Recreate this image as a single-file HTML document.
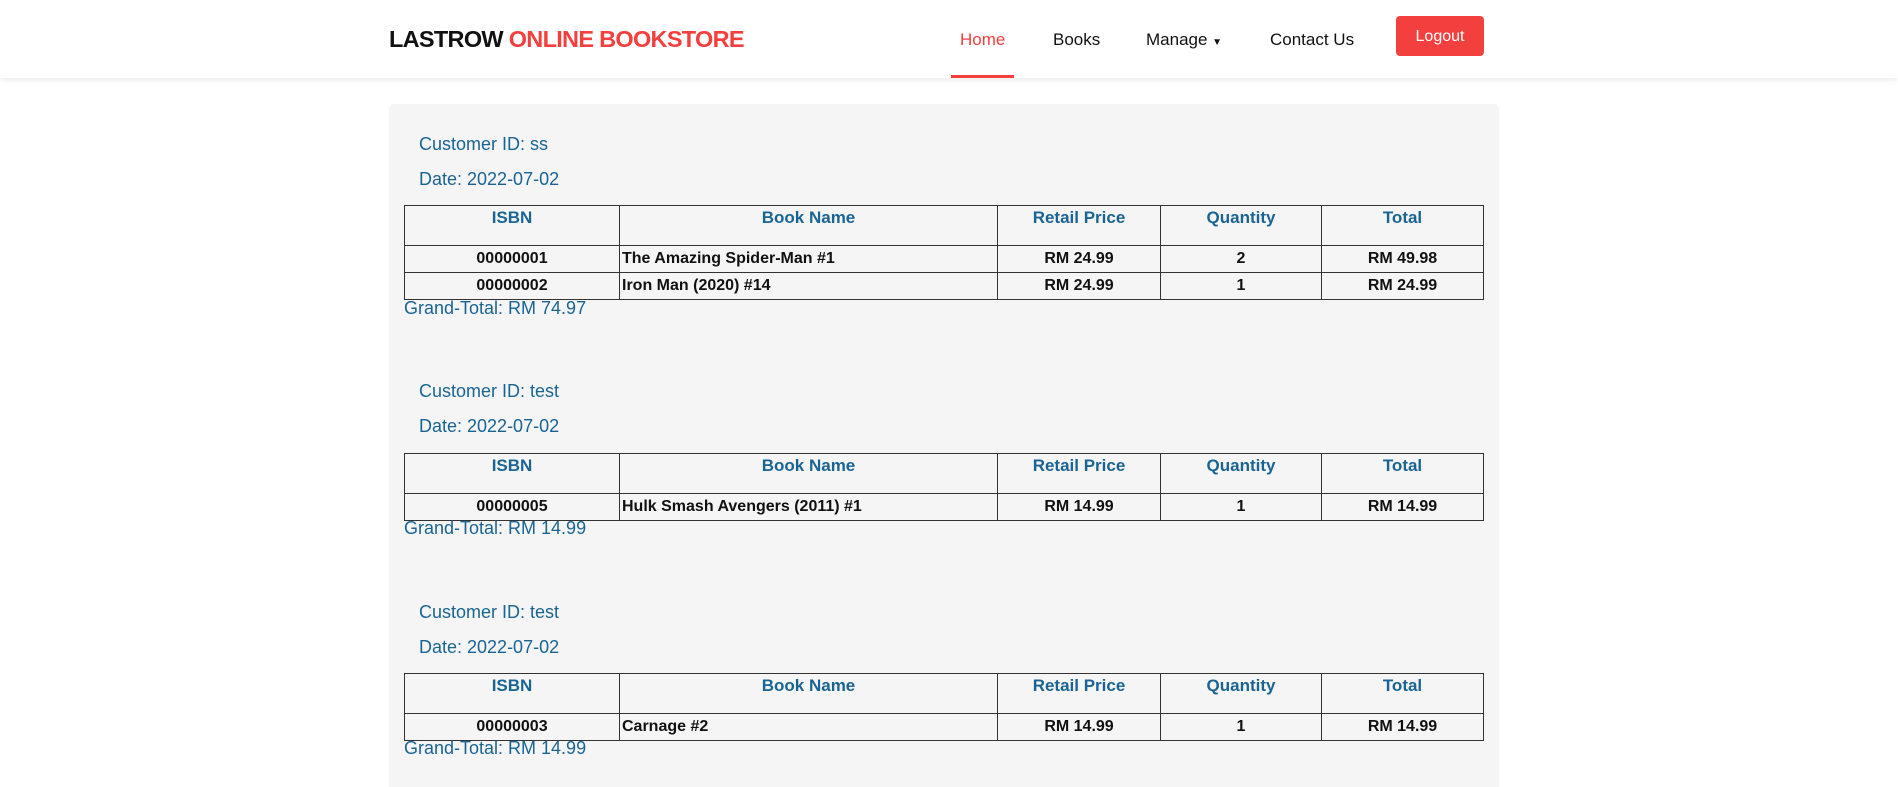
<!DOCTYPE html>
<html style="overflow:hidden;height:787px"><head><meta charset="utf-8"><style>
*{box-sizing:border-box;margin:0;padding:0}
body{width:1898px;height:787px;overflow:hidden;background:#fff;font-family:"Liberation Sans",sans-serif;position:relative}
.nav{position:absolute;left:0;top:0;width:1898px;height:78px;background:#fff;box-shadow:0 2px 6px rgba(0,0,0,.08);z-index:2}
.logo{position:absolute;left:389px;top:26px;font-size:23.5px;font-weight:bold;color:#111;letter-spacing:-0.7px}
.logo span{color:#f43f3f}
.ni{position:absolute;top:30px;font-size:17px;color:#111}
.home{color:#f43f3f}
.ul{position:absolute;left:951px;top:75px;width:63px;height:3px;background:#f43f3f}
.btn{position:absolute;left:1396px;top:16px;width:88px;height:40px;background:#f43f3f;border-radius:4px;color:#fff;font-size:16px;text-align:center;line-height:42px}
.box{position:absolute;left:389px;top:104px;width:1110px;height:683px;background:#f5f5f5;border-radius:5px 5px 0 0}
.t{position:absolute;color:#1a6494;font-size:18px}
table{position:absolute;left:404px;width:1080px;border-collapse:collapse;font-size:16px}
td,th{border:1px solid #333;text-align:center;font-weight:bold}
th{color:#1a6494;font-size:17px;vertical-align:top;height:40px;padding-top:2px}
td{color:#111;height:27px}
td.l{text-align:left;padding-left:2px}
</style></head><body>
<div class="nav">
<div class="logo">LASTROW <span>ONLINE BOOKSTORE</span></div>
<div class="ni home" style="left:960px">Home</div>
<div class="ni" style="left:1053px">Books</div>
<div class="ni" style="left:1146px">Manage <span style="font-size:10px">▼</span></div>
<div class="ni" style="left:1270px">Contact Us</div>
<div class="ul"></div>
<div class="btn">Logout</div>
</div>
<div class="box"></div>

<div class="t" style="left:419px;top:134px">Customer ID: ss</div>
<div class="t" style="left:419px;top:169px">Date: 2022-07-02</div>
<table style="top:205px"><colgroup><col style="width:215px"><col style="width:378px"><col style="width:163px"><col style="width:161px"><col></colgroup>
<tr><th>ISBN</th><th>Book Name</th><th>Retail Price</th><th>Quantity</th><th>Total</th></tr>
<tr><td>00000001</td><td class="l">The Amazing Spider-Man #1</td><td>RM 24.99</td><td>2</td><td>RM 49.98</td></tr>
<tr><td>00000002</td><td class="l">Iron Man (2020) #14</td><td>RM 24.99</td><td>1</td><td>RM 24.99</td></tr></table>
<div class="t" style="left:404px;top:298px">Grand-Total: RM 74.97</div>

<div class="t" style="left:419px;top:381px">Customer ID: test</div>
<div class="t" style="left:419px;top:416px">Date: 2022-07-02</div>
<table style="top:453px"><colgroup><col style="width:215px"><col style="width:378px"><col style="width:163px"><col style="width:161px"><col></colgroup>
<tr><th>ISBN</th><th>Book Name</th><th>Retail Price</th><th>Quantity</th><th>Total</th></tr>
<tr><td>00000005</td><td class="l">Hulk Smash Avengers (2011) #1</td><td>RM 14.99</td><td>1</td><td>RM 14.99</td></tr></table>
<div class="t" style="left:404px;top:518px">Grand-Total: RM 14.99</div>

<div class="t" style="left:419px;top:602px">Customer ID: test</div>
<div class="t" style="left:419px;top:637px">Date: 2022-07-02</div>
<table style="top:673px"><colgroup><col style="width:215px"><col style="width:378px"><col style="width:163px"><col style="width:161px"><col></colgroup>
<tr><th>ISBN</th><th>Book Name</th><th>Retail Price</th><th>Quantity</th><th>Total</th></tr>
<tr><td>00000003</td><td class="l">Carnage #2</td><td>RM 14.99</td><td>1</td><td>RM 14.99</td></tr></table>
<div class="t" style="left:404px;top:738px">Grand-Total: RM 14.99</div>
</body></html>
